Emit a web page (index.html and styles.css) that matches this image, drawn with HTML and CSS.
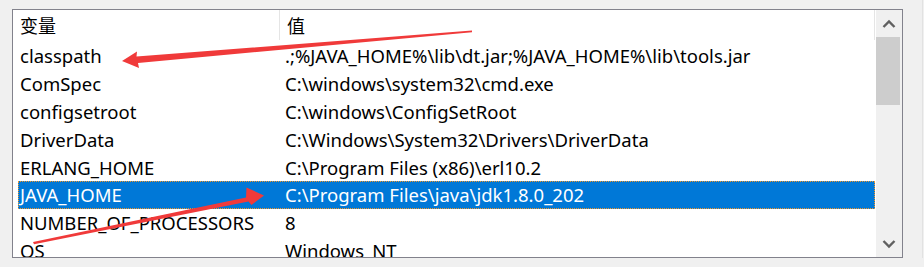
FILE: index.html
```html
<!DOCTYPE html>
<html lang="zh">
<head>
<meta charset="utf-8">
<title>环境变量</title>
<link rel="stylesheet" href="styles.css">
</head>
<body>
<div class="page">
  <div class="listbox">
    <div class="list">
      <div class="header">
        <div class="hcell hcell-name">变量</div>
        <div class="hcell hcell-value">值</div>
      </div>
      <div class="rows">
        <div class="row"><span class="c1">classpath</span><span class="c2">.;%JAVA_HOME%\lib\dt.jar;%JAVA_HOME%\lib\tools.jar</span></div>
        <div class="row"><span class="c1">ComSpec</span><span class="c2">C:\windows\system32\cmd.exe</span></div>
        <div class="row"><span class="c1">configsetroot</span><span class="c2">C:\windows\ConfigSetRoot</span></div>
        <div class="row"><span class="c1">DriverData</span><span class="c2">C:\Windows\System32\Drivers\DriverData</span></div>
        <div class="row"><span class="c1">ERLANG_HOME</span><span class="c2">C:\Program Files (x86)\erl10.2</span></div>
        <div class="row selected"><span class="c1">JAVA_HOME</span><span class="c2">C:\Program Files\java\jdk1.8.0_202</span></div>
        <div class="row"><span class="c1">NUMBER_OF_PROCESSORS</span><span class="c2">8</span></div>
        <div class="row"><span class="c1">OS</span><span class="c2">Windows_NT</span></div>
      </div>
    </div>
    <div class="scrollbar">
      <div class="sb-btn">
        <svg width="14" height="10" viewBox="0 0 14 10"><path d="M1.5 8 L7 2.5 L12.5 8" fill="none" stroke="#606060" stroke-width="2.4"/></svg>
      </div>
      <div class="sb-track"><div class="sb-thumb"></div></div>
      <div class="sb-btn">
        <svg width="14" height="10" viewBox="0 0 14 10"><path d="M1.5 2 L7 7.5 L12.5 2" fill="none" stroke="#606060" stroke-width="2.4"/></svg>
      </div>
    </div>
  </div>
  <div class="edge"></div>
</div>
<svg class="annot" width="924" height="267" viewBox="0 0 924 267">
  <polygon points="122,61 137,51.5 136.5,56.5 472,30.5 472,32.2 138,63 139,68" fill="#f03a3a"/>
  <polygon points="264,195.5 246.5,187.5 246,197.5 33,242 34,244.2 248.5,201.5 251.5,205" fill="#f03a3a"/>
</svg>
</body>
</html>
```
FILE: styles.css
```css
html, body {
  margin: 0;
  padding: 0;
}
body {
  background: #f0f0f0;
  width: 924px;
  height: 267px;
  overflow: hidden;
  position: relative;
  font-family: "Noto Sans", "Noto Sans CJK SC", sans-serif;
  font-size: 18.5px;
  color: #000;
}
.page {
  display: flex;
  padding: 9px 0 0 12px;
}
.listbox {
  width: 889px;
  height: 247px;
  border: 1px solid #82828c;
  background: #fff;
  display: flex;
  overflow: hidden;
}
.list {
  width: 862px;
  display: flex;
  flex-direction: column;
}
.header {
  height: 32px;
  display: flex;
  flex-shrink: 0;
}
.hcell {
  display: flex;
  align-items: center;
  height: 30px;
  font-family: "Noto Sans CJK SC", sans-serif;
  font-size: 18px;
}
.hcell-name {
  width: 259px;
  padding-left: 7px;
  border-right: 1px solid #e5e5e5;
}
.hcell-value {
  flex: 1;
  padding-left: 7px;
  border-right: 1px solid #e5e5e5;
}
.rows {
  display: flex;
  flex-direction: column;
  padding-left: 5px;
}
.row {
  height: 27.8px;
  display: flex;
  align-items: center;
  flex-shrink: 0;
  white-space: nowrap;
}
.c1 {
  width: 260px;
  padding-left: 2px;
}
.c2 {
  padding-left: 5px;
}
.row.selected {
  background: #0078d7;
  color: #fff;
  outline: 1px dotted #f0962a;
  outline-offset: -1px;
}
.scrollbar {
  width: 26px;
  margin-left: 1px;
  background: #f0f0f0;
  display: flex;
  flex-direction: column;
}
.sb-btn {
  height: 27px;
  display: flex;
  align-items: center;
  justify-content: center;
  flex-shrink: 0;
  padding-right: 1px;
}
.sb-track {
  flex: 1;
}
.sb-thumb {
  width: 24px;
  height: 68px;
  background: #cdcdcd;
}
.edge {
  width: 1px;
  height: 258px;
  margin-top: -9px;
  margin-left: 19px;
  background: #e2e2e2;
}
.annot {
  position: absolute;
  left: 0;
  top: 0;
  pointer-events: none;
}
```
